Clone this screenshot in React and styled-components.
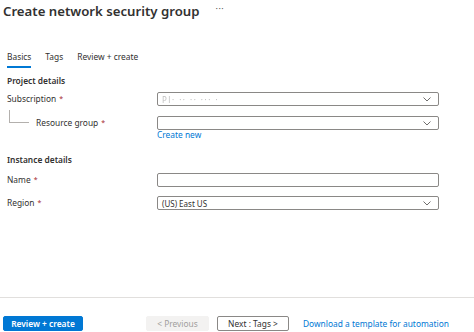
import styled, { createGlobalStyle } from "styled-components";

const GlobalStyle = createGlobalStyle`
    html, body {
        margin: 0;
        padding: 0;
        background: #ffffff;
    }
    body {
        font-family: "Noto Sans", "Open Sans", sans-serif;
        color: #323130;
    }
`;

const Page = styled.div`
    width: 474px;
    height: 332px;
    display: flex;
    flex-direction: column;
    box-sizing: border-box;
    overflow: hidden;
`;

const Header = styled.div`
    display: flex;
    align-items: center;
    gap: 16px;
    padding: 0 0 0 3px;
    height: 21px;
`;

const Title = styled.h1`
    margin: 0;
    font-size: 13.2px;
    line-height: 18px;
    font-weight: 600;
    color: #323130;
`;

const More = styled.span`
    font-size: 9px;
    color: #605e5c;
    letter-spacing: 0.5px;
    margin-top: -4px;
`;

const Tabs = styled.div`
    display: flex;
    gap: 14px;
    padding-left: 7px;
    margin-top: 30px;
`;

const Tab = styled.div`
    font-size: 8.4px;
    line-height: 12px;
    color: #323130;
    padding-bottom: 3px;
    border-bottom: 2px solid ${p => (p.active ? "#0078d4" : "transparent")};
`;

const Body = styled.div`
    padding: 0 35px 0 7px;
`;

const Section = styled.h2`
    margin: ${p => p.top}px 0 0 0;
    font-size: 8.4px;
    line-height: 12px;
    font-weight: 600;
    color: #323130;
`;

const Row = styled.div`
    display: grid;
    grid-template-columns: 150px 282px;
    align-items: center;
    margin-top: ${p => p.top}px;
`;

const Label = styled.div`
    display: flex;
    align-items: center;
    font-size: 8.4px;
    line-height: 12px;
    color: #323130;
    padding-left: ${p => (p.nested ? "2px" : "0")};
`;

const Required = styled.span`
    color: #a4262c;
    margin-left: 3px;
    font-size: 7px;
`;

const Connector = styled.span`
    width: 19px;
    height: 12px;
    border-left: 1px solid #b3b0ad;
    border-bottom: 1px solid #b3b0ad;
    margin-top: -13px;
    margin-right: 7px;
`;

const Field = styled.div`
    height: 14px;
    box-sizing: border-box;
    border: 1px solid #8a8886;
    border-radius: 2px;
    display: flex;
    align-items: center;
    justify-content: space-between;
    padding: 0 7px 0 4px;
    font-size: 8px;
    color: #323130;
    background: #fff;
`;

const Blurred = styled.span`
    color: #c0c0c0;
    filter: blur(0.6px);
    letter-spacing: 1.5px;
`;

const LinkText = styled.a`
    font-size: 8.4px;
    line-height: 10px;
    color: #0078d4;
    text-decoration: none;
`;

const Footer = styled.div`
    margin-top: auto;
    border-top: 1px solid #e1dfdd;
    padding: 18px 0 1px 3px;
    display: flex;
    align-items: center;
`;

const Button = styled.button`
    height: 15px;
    box-sizing: border-box;
    font-family: inherit;
    font-size: 8.4px;
    border-radius: 2px;
    padding: 0;
    width: ${p => p.width}px;
    margin-right: ${p => p.gap || 0}px;
    background: ${p => (p.primary ? "#0078d4" : p.disabled ? "#f3f2f1" : "#fff")};
    color: ${p => (p.primary ? "#fff" : p.disabled ? "#a19f9d" : "#323130")};
    border: 1px solid ${p => (p.primary ? "#0078d4" : p.disabled ? "#f3f2f1" : "#8a8886")};
    font-weight: ${p => (p.primary ? 600 : 400)};
`;

const Chevron = () => (
    <svg width="8" height="5" viewBox="0 0 8 5">
        <path d="M0.5 0.5 L4 4 L7.5 0.5" fill="none" stroke="#605e5c" strokeWidth="0.9" />
    </svg>
);

export default function App() {
    return (
        <Page>
            <GlobalStyle />
            <Header>
                <Title>Create network security group</Title>
                <More>···</More>
            </Header>
            <Tabs>
                <Tab active>Basics</Tab>
                <Tab>Tags</Tab>
                <Tab>Review + create</Tab>
            </Tabs>
            <Body>
                <Section top={7}>Project details</Section>
                <Row top={5}>
                    <Label>Subscription<Required>*</Required></Label>
                    <Field>
                        <Blurred>Pl· ·· ·· ··· ·</Blurred>
                        <Chevron />
                    </Field>
                </Row>
                <Row top={10}>
                    <Label nested>
                        <Connector />
                        Resource group<Required>*</Required>
                    </Label>
                    <Field>
                        <span />
                        <Chevron />
                    </Field>
                </Row>
                <Row top={0}>
                    <span />
                    <LinkText href="#">Create new</LinkText>
                </Row>
                <Section top={14}>Instance details</Section>
                <Row top={7}>
                    <Label>Name<Required>*</Required></Label>
                    <Field />
                </Row>
                <Row top={9}>
                    <Label>Region<Required>*</Required></Label>
                    <Field>
                        <span>(US) East US</span>
                        <Chevron />
                    </Field>
                </Row>
            </Body>
            <Footer>
                <Button primary width={80} gap={63}>Review + create</Button>
                <Button disabled width={63} gap={8}>&lt; Previous</Button>
                <Button width={72} gap={14}>Next : Tags &gt;</Button>
                <LinkText href="#">Download a template for automation</LinkText>
            </Footer>
        </Page>
    );
}
